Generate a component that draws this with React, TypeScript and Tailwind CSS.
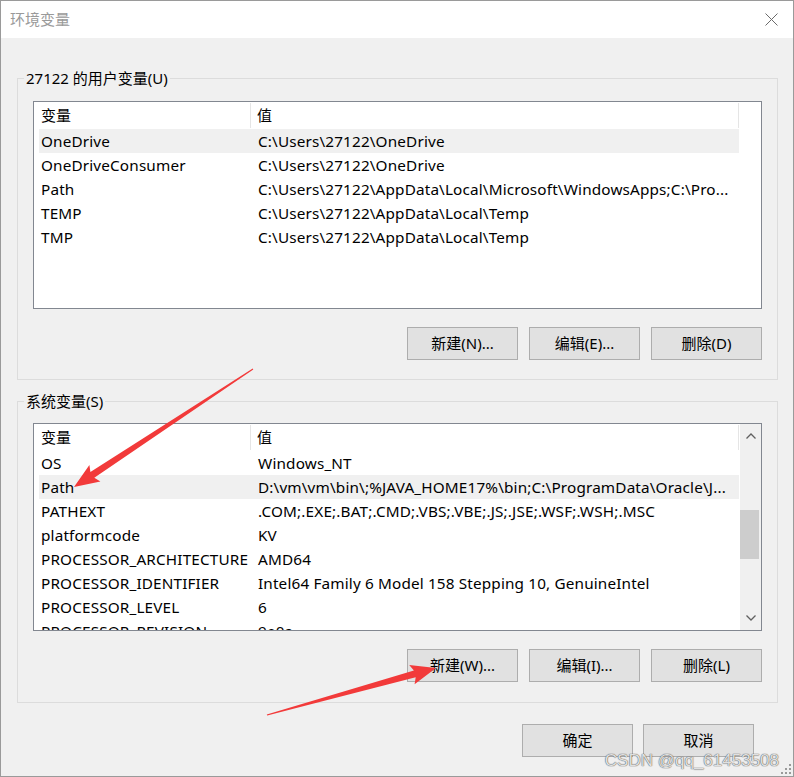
import React from "react";

function arrowPts(
  tx: number,
  ty: number,
  px: number,
  py: number,
  hl: number,
  hw: number,
  sh: number,
  st: number
): string {
  const dx = px - tx;
  const dy = py - ty;
  const L = Math.hypot(dx, dy);
  const ux = dx / L;
  const uy = dy / L;
  const nx = -uy;
  const ny = ux;
  const bx = px - ux * hl;
  const by = py - uy * hl;
  const pts = [
    [tx + nx * st, ty + ny * st],
    [bx + nx * sh, by + ny * sh],
    [bx + nx * hw - ux * 3, by + ny * hw - uy * 3],
    [px, py],
    [bx - nx * hw - ux * 3, by - ny * hw - uy * 3],
    [bx - nx * sh, by - ny * sh],
    [tx - nx * st, ty - ny * st],
  ];
  return pts.map((p) => p.map((v) => v.toFixed(1)).join(",")).join(" ");
}

type Row = { name: string; value: string; sel?: boolean };

const userRows: Row[] = [
  { name: "OneDrive", value: "C:\\Users\\27122\\OneDrive", sel: true },
  { name: "OneDriveConsumer", value: "C:\\Users\\27122\\OneDrive" },
  {
    name: "Path",
    value: "C:\\Users\\27122\\AppData\\Local\\Microsoft\\WindowsApps;C:\\Pro...",
  },
  { name: "TEMP", value: "C:\\Users\\27122\\AppData\\Local\\Temp" },
  { name: "TMP", value: "C:\\Users\\27122\\AppData\\Local\\Temp" },
];

const sysRows: Row[] = [
  { name: "OS", value: "Windows_NT" },
  {
    name: "Path",
    value: "D:\\vm\\vm\\bin\\;%JAVA_HOME17%\\bin;C:\\ProgramData\\Oracle\\J...",
    sel: true,
  },
  { name: "PATHEXT", value: ".COM;.EXE;.BAT;.CMD;.VBS;.VBE;.JS;.JSE;.WSF;.WSH;.MSC" },
  { name: "platformcode", value: "KV" },
  { name: "PROCESSOR_ARCHITECTURE", value: "AMD64" },
  { name: "PROCESSOR_IDENTIFIER", value: "Intel64 Family 6 Model 158 Stepping 10, GenuineIntel" },
  { name: "PROCESSOR_LEVEL", value: "6" },
  { name: "PROCESSOR_REVISION", value: "9e0a" },
];

function Header() {
  return (
    <div className="flex h-[27px] w-[700px] shrink-0 ml-[5px]">
      <div className="w-[212px] shrink-0 pl-[2px] flex items-center border-r border-[#e5e5e5] my-[1px]">
        变量
      </div>
      <div className="flex-1 pl-[6px] flex items-center border-r border-[#e5e5e5] my-[1px]">
        值
      </div>
    </div>
  );
}

function Rows({ rows }: { rows: Row[] }) {
  return (
    <>
      {rows.map((r, i) => (
        <div
          key={i}
          className={
            "flex h-[24px] w-[700px] shrink-0 ml-[5px] items-center text-[15.3px] tracking-[0.15px] " +
            (r.sel ? "bg-[#f0f0f0]" : "")
          }
        >
          <div className="w-[212px] shrink-0 pl-[2px] whitespace-nowrap overflow-hidden">{r.name}</div>
          <div className="flex-1 pl-[7px] pr-[4px] whitespace-nowrap overflow-hidden text-ellipsis">
            {r.value}
          </div>
        </div>
      ))}
    </>
  );
}

function Btn({ label, className = "" }: { label: string; className?: string }) {
  return (
    <div
      className={
        "w-[111px] h-[33px] bg-[#e1e1e1] border border-[#adadad] flex items-center justify-center text-black " +
        className
      }
    >
      {label}
    </div>
  );
}

function Group({
  label,
  children,
  className = "",
}: {
  label: string;
  children: React.ReactNode;
  className?: string;
}) {
  return (
    <div className={"relative border border-[#dcdcdc] h-[302px] px-[15px] flex flex-col " + className}>
      <div className="absolute left-[6px] top-[-11px] h-[20px] leading-[20px] px-[2px] bg-[#f0f0f0] text-black">
        {label}
      </div>
      {children}
    </div>
  );
}

export default function App() {
  const a1 = arrowPts(253, 369, 74, 487, 22, 10, 3.5, 0.6);
  const a2 = arrowPts(267, 715, 436, 668, 22, 10, 3.5, 0.6);
  return (
    <div className="relative w-[794px] h-[777px] border border-[#9a9a9a] flex flex-col overflow-hidden font-['Noto_Sans','Noto_Sans_CJK_SC',sans-serif] text-[15px] text-black">
      {/* title bar */}
      <div className="h-[37px] shrink-0 bg-white flex items-center justify-between pl-[9px] pr-[15px]">
        <span className="text-[#9a9a9a] text-[15px]">环境变量</span>
        <svg width="13" height="13" viewBox="0 0 13 13">
          <path d="M0.5 0.5 L12.5 12.5 M12.5 0.5 L0.5 12.5" stroke="#6a6a6a" strokeWidth="1" fill="none" />
        </svg>
      </div>

      {/* body */}
      <div className="flex-1 bg-[#f0f0f0] pl-[16px] pr-[15px] pt-[40px] flex flex-col">
        <Group label="27122 的用户变量(U)" className="pt-[22px]">
          <div className="h-[208px] shrink-0 bg-white border border-[#828790] flex flex-col overflow-hidden">
            <Header />
            <Rows rows={userRows} />
          </div>
          <div className="flex justify-end gap-[11px] mt-[18px]">
            <Btn label="新建(N)..." />
            <Btn label="编辑(E)..." />
            <Btn label="删除(D)" />
          </div>
        </Group>

        <Group label="系统变量(S)" className="mt-[21px] pt-[21px]">
          <div className="h-[208px] shrink-0 bg-white border border-[#828790] flex overflow-hidden">
            <div className="flex-1 flex flex-col overflow-hidden">
              <Header />
              <Rows rows={sysRows} />
            </div>
            <div className="w-[21px] shrink-0 bg-[#f0f0f0] flex flex-col">
              <div className="h-[24px] flex items-center justify-center">
                <svg width="10" height="6" viewBox="0 0 10 6">
                  <path d="M0.5 5.5 L5 1 L9.5 5.5" stroke="#606060" strokeWidth="1.3" fill="none" />
                </svg>
              </div>
              <div className="flex-1 relative">
                <div className="absolute left-0 top-[62px] w-[19px] h-[49px] bg-[#cdcdcd]" />
              </div>
              <div className="h-[24px] flex items-center justify-center">
                <svg width="10" height="6" viewBox="0 0 10 6">
                  <path d="M0.5 0.5 L5 5 L9.5 0.5" stroke="#606060" strokeWidth="1.3" fill="none" />
                </svg>
              </div>
            </div>
          </div>
          <div className="flex justify-end gap-[11px] mt-[18px]">
            <Btn label="新建(W)..." />
            <Btn label="编辑(I)..." />
            <Btn label="删除(L)" />
          </div>
        </Group>

        <div className="flex justify-end gap-[10px] mt-[21px] pr-[24px]">
          <Btn label="确定" />
          <Btn label="取消" />
        </div>
      </div>

      {/* arrows overlay */}
      <svg className="absolute left-[-1px] top-[-1px] pointer-events-none" width="794" height="777">
        <polygon points={a1} fill="#f23a3a" />
        <polygon points={a2} fill="#f23a3a" />
      </svg>

      {/* watermark */}
      <div className="absolute right-[14px] bottom-[5px] text-[17px] leading-[20px] font-['Liberation_Sans',Arial,sans-serif] text-[rgba(250,250,250,0.85)] [text-shadow:0_0_1px_#555,0_0_1px_#555]">
        CSDN @qq_61453508
      </div>

      {/* resize grip */}
      <svg className="absolute right-[1px] bottom-[1px]" width="11" height="11" viewBox="0 0 11 11">
        <rect x="8" y="0" width="2" height="2" fill="#9a9a9a" />
        <rect x="4" y="4" width="2" height="2" fill="#9a9a9a" />
        <rect x="8" y="4" width="2" height="2" fill="#9a9a9a" />
        <rect x="0" y="8" width="2" height="2" fill="#9a9a9a" />
        <rect x="4" y="8" width="2" height="2" fill="#9a9a9a" />
        <rect x="8" y="8" width="2" height="2" fill="#9a9a9a" />
      </svg>
    </div>
  );
}
